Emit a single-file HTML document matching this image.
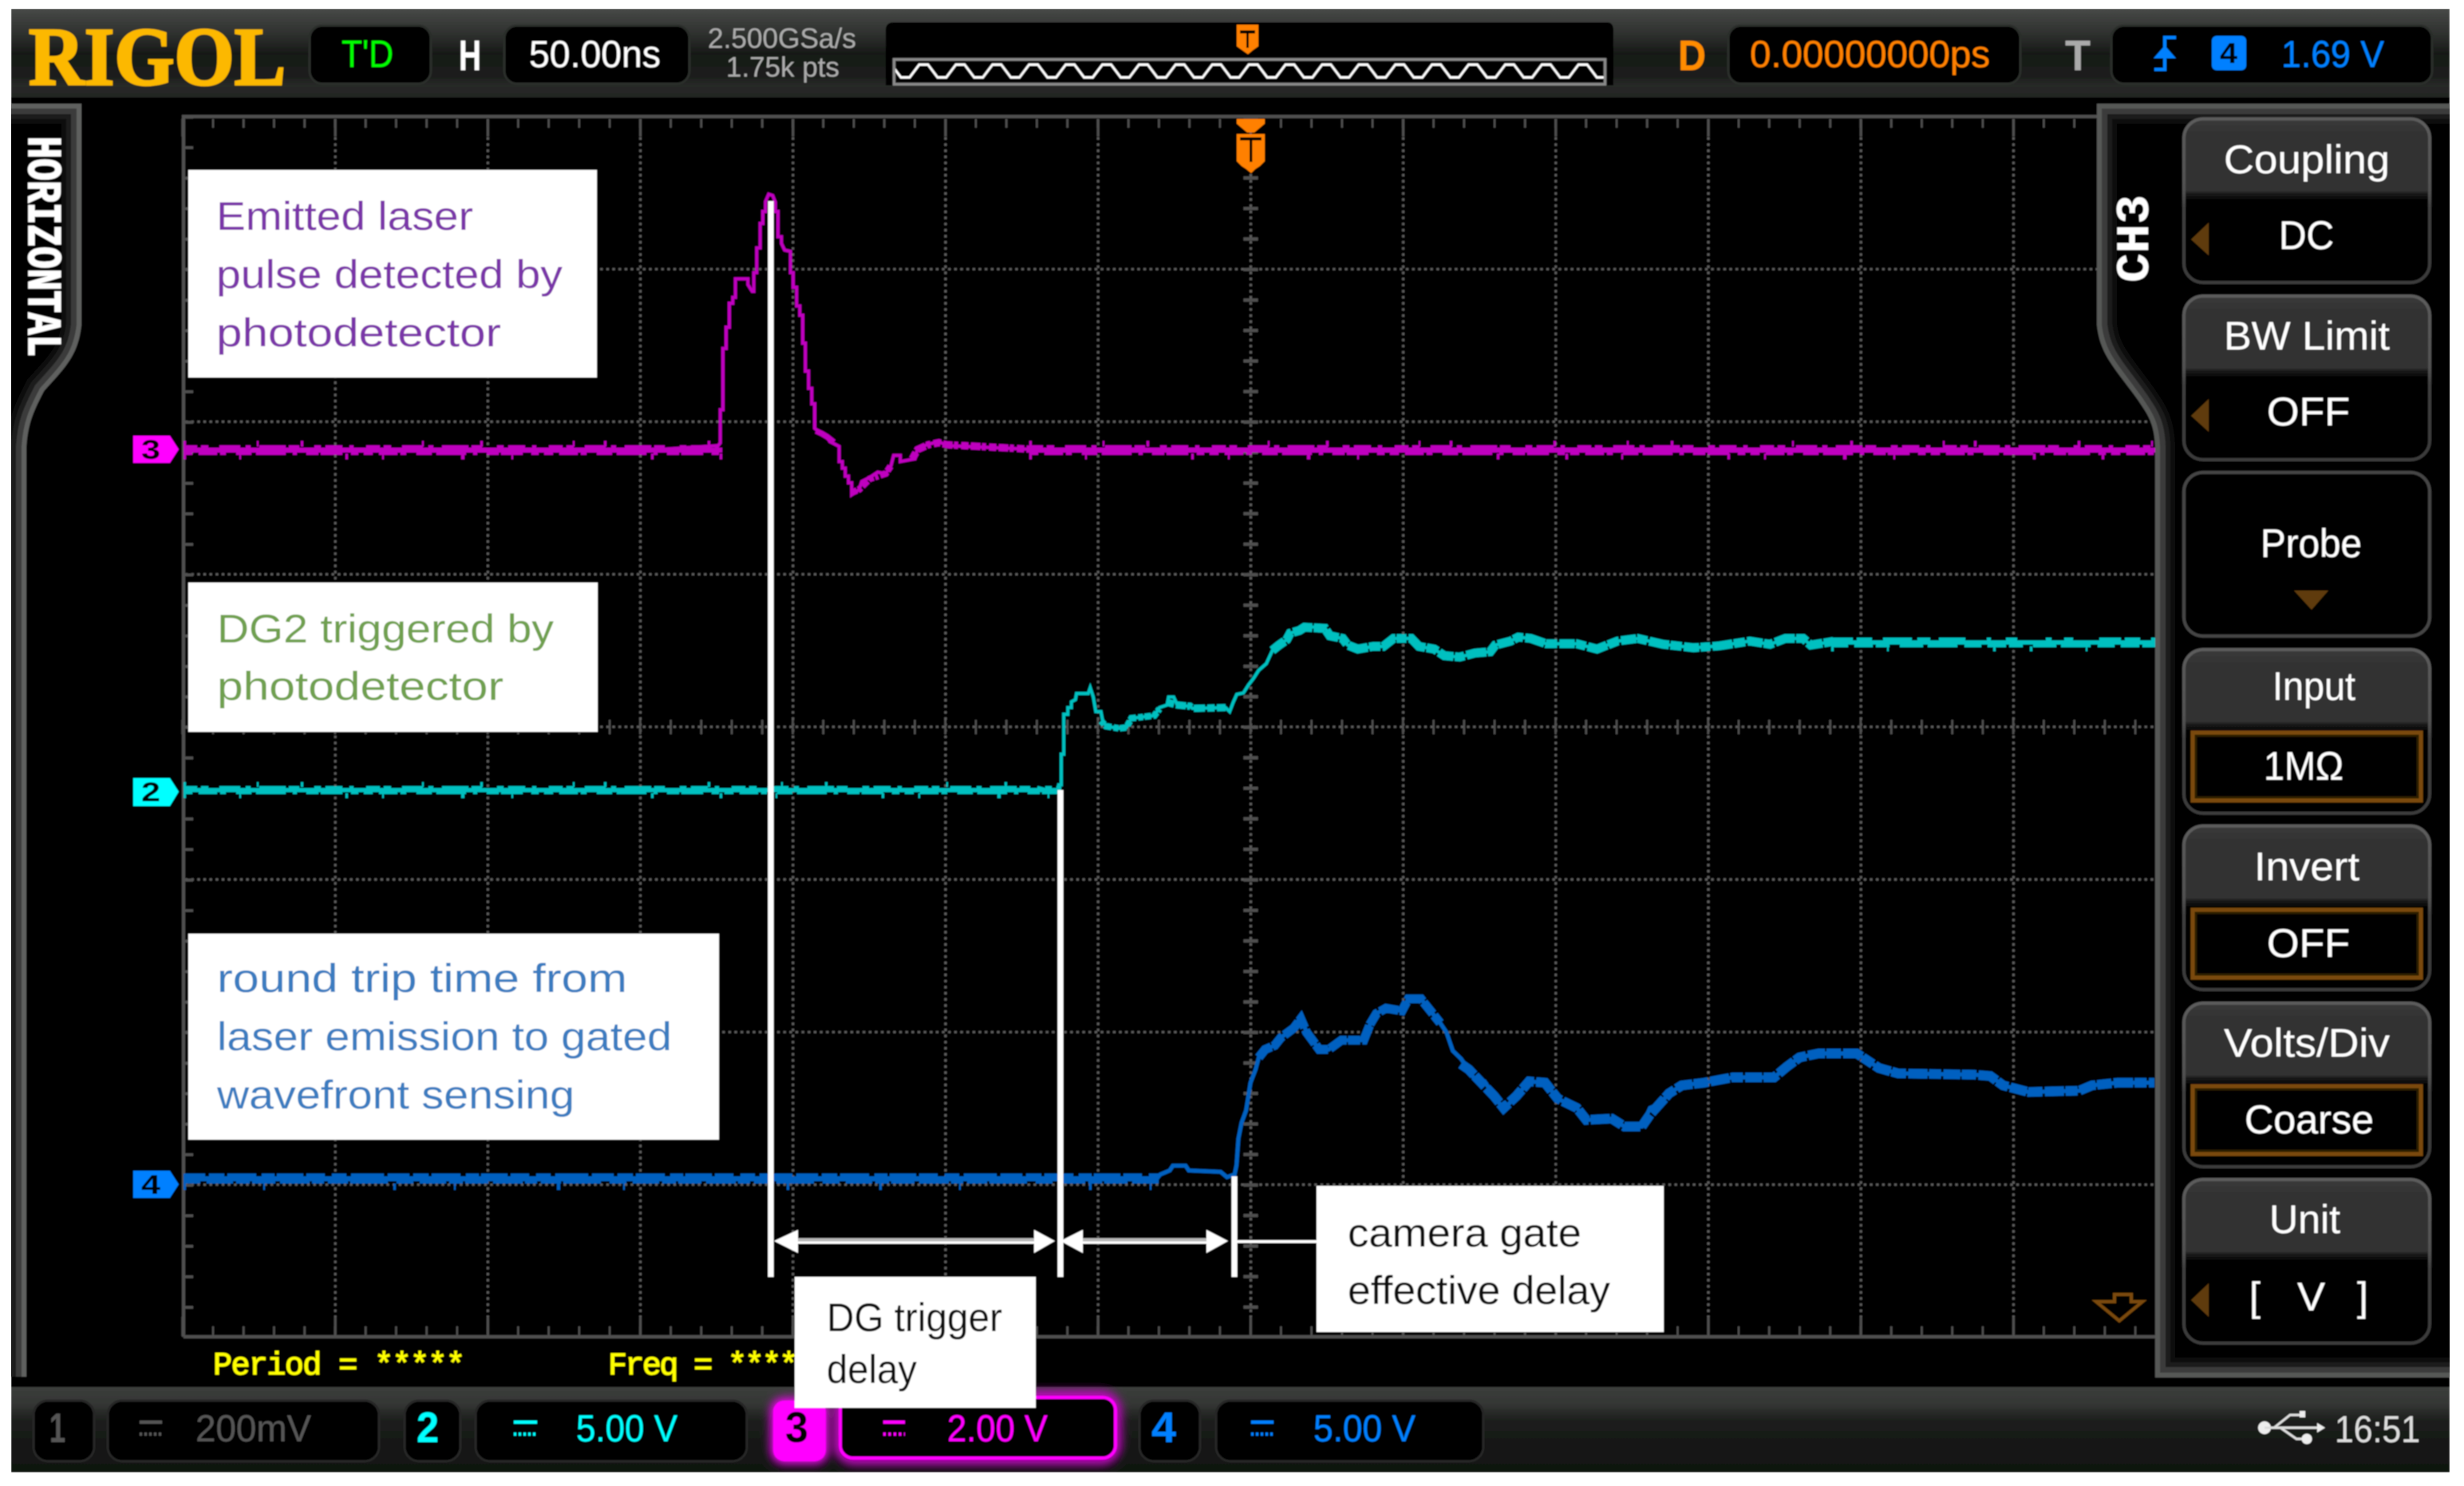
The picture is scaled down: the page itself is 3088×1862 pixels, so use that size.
<!DOCTYPE html>
<html lang="en">
<head>
<meta charset="utf-8">
<title>RIGOL oscilloscope capture</title>
<style>
html,body{margin:0;padding:0;background:#fff;width:3088px;height:1862px;overflow:hidden}
svg{display:block}
text{font-family:"Liberation Sans",sans-serif}
.m{font-family:"Liberation Mono",monospace}
.v{vector-effect:non-scaling-stroke;fill:none;stroke-linejoin:miter}
.lb{fill:#fff;font-size:50px}
.hd{fill:#aaa;font-size:35px}
</style>
</head>
<body>
<svg width="3088" height="1862" viewBox="0 0 3088 1862" xmlns="http://www.w3.org/2000/svg">
<defs>
<clipPath id="img"><rect x="14" y="11" width="3056" height="1834"/></clipPath>
<filter id="soft" filterUnits="userSpaceOnUse" x="0" y="0" width="3088" height="1862"><feGaussianBlur stdDeviation="0.7"/></filter>
<linearGradient id="top" x1="0" y1="0" x2="0" y2="1">
<stop offset="0" stop-color="#474947"/><stop offset=".12" stop-color="#3c3e3c"/><stop offset=".32" stop-color="#2b2d2b"/><stop offset=".5" stop-color="#171917"/><stop offset=".76" stop-color="#1b1d1b"/><stop offset=".86" stop-color="#272927"/><stop offset="1" stop-color="#232523"/>
</linearGradient>
<linearGradient id="bot" x1="0" y1="0" x2="0" y2="1">
<stop offset="0" stop-color="#3b3d3b"/><stop offset=".2" stop-color="#343634"/><stop offset=".4" stop-color="#1c1e1c"/><stop offset=".8" stop-color="#131513"/><stop offset="1" stop-color="#101210"/>
</linearGradient>
<linearGradient id="bf" x1="0" y1="0" x2="0" y2="1">
<stop offset="0" stop-color="#3a3a3a"/><stop offset=".08" stop-color="#333"/><stop offset=".44" stop-color="#303030"/><stop offset=".455" stop-color="#1c1c1c"/><stop offset=".5" stop-color="#000"/><stop offset="1" stop-color="#000"/>
</linearGradient>
<linearGradient id="bs" x1="0" y1="0" x2="0" y2="1">
<stop offset="0" stop-color="#5c5c5c"/><stop offset=".45" stop-color="#505050"/><stop offset=".55" stop-color="#3c3c3c"/><stop offset="1" stop-color="#3a3a3a"/>
</linearGradient>
<pattern id="wave" patternUnits="userSpaceOnUse" x="1135" y="76" width="45.9" height="26">
<path d="M0,21H5L17,5H28L40,21H46" fill="none" stroke="#fff" stroke-width="3"/>
</pattern>
<clipPath id="rc"><path d="M3200,130H2628V407C2632,445 2650,460 2680,502C2692,520 2700,530 2701,560V1726H3200Z"/></clipPath>
<clipPath id="lc"><path d="M-60,130H102V407C98,445 82,460 55,490C42,515 35,530 33,560V1725H-60Z"/></clipPath>
<filter id="gl" x="-20%" y="-30%" width="140%" height="160%"><feGaussianBlur stdDeviation="6"/></filter>
<g id="btn"><rect x="2737" y="0" width="308" height="205" rx="24" fill="url(#bf)" stroke="url(#bs)" stroke-width="4"/></g>
<g id="box"><rect x="2748" y="0" width="286" height="85" fill="#000" stroke="#7a4a08" stroke-width="5"/><rect x="2752" y="4" width="278" height="77" fill="none" stroke="#2c1a03" stroke-width="3"/></g>
</defs>

<rect width="3088" height="1862" fill="#fff"/>
<g clip-path="url(#img)" filter="url(#soft)">
<rect x="14" y="11" width="3056" height="1834" fill="#000"/>

<!-- grid -->
<g fill="none" stroke="#5c5c5c" stroke-width="3" stroke-dasharray="3.2 4.45">
<path d="M420.2,172V1650M611.4,172V1650M802.6,172V1650M993.8,172V1650M1185,172V1650M1376.2,172V1650M1567.5,172V1650M1758.6,172V1650M1949.8,172V1650M2141,172V1650M2332.2,172V1650M2523.4,172V1650"/>
<path d="M232,337.2H2706M232,528.4H2706M232,719.6H2706M232,910.8H2706M232,1102H2706M232,1293.2H2706M232,1484.4H2706"/>
</g>
<g fill="none" stroke="#505050">
<path d="M230,1675V146H2706M230,1675H2706" stroke-width="4"/>
<path d="M227.5,154.5H2706" stroke-width="11" stroke-dasharray="2.5 35.74"/>
<path d="M227.5,1668H2706" stroke-width="12" stroke-dasharray="2.5 35.74"/>
<path d="M236,145V1676" stroke-width="12" stroke-dasharray="3.5 34.74"/>
<path d="M227.5,911H2706" stroke-width="18" stroke-dasharray="2.5 35.74"/>
<path d="M1567.5,144.5V1676" stroke-width="18" stroke-dasharray="4 34.24"/>
<path d="M227.5,160H2706" stroke-width="22" stroke-dasharray="3 188.2"/>
<path d="M227.5,1662H2706" stroke-width="24" stroke-dasharray="3 188.2"/>
</g>

<!-- big trigger marker -->
<path d="M1550,149H1585V155L1572,166H1563L1550,155Z" fill="#ff8000"/>
<path d="M1550,168H1585V202L1579,208L1573,212L1568,217L1562,212L1556,208L1550,202Z" fill="#ff8000"/>
<path d="M1554,172H1581V176H1569.5V203H1566V176H1554Z" fill="#000"/>

<!-- magenta trace -->
<g stroke="#bf00bf" fill="none">
<path d="M230,564H905M1290,564H2706" stroke-width="6"/>
<path d="M230,561H905M1290,561H2706" stroke-width="6" stroke-dasharray="17 5 9 14 26 7 6 11 33 4 13 19 8 6 21 9 5 16"/>
<path d="M230,567H905M1290,567H2706" stroke-width="6" stroke-dasharray="11 8 23 4 7 13 19 6 37 9 5 12 15 3 27 11 9 7"/>
<path d="M230,572H905M1290,572H2706" stroke-width="7" stroke-dasharray="3 67 2 131 3 43 2 97 4 59 2 173 3 83"/>
<path d="M230,556H905M1290,556H2706" stroke-width="7" stroke-dasharray="3 89 2 53 3 149 2 71 3 113 2 37 3 127"/>
</g>
<g transform="translate(800 200) scale(.33333)">
<polyline class="v" stroke="#bf00bf" stroke-width="4" points="0,1095 300,1075 308,1065 308,940 318,940 318,710 330,710 330,630 342,630 342,540 355,540 355,518 365,518 365,448 412,448 412,470 428,495 434,495 434,425 445,425 445,332 458,332 458,240 468,240 468,195 478,195 478,158 490,130 505,135 515,160 515,195 525,195 525,290 538,290 538,315 550,340 572,345 572,425 582,425 582,480 595,480 595,550 607,550 607,585 618,585 618,690 628,690 628,795 640,795 640,860 652,860 652,918 663,918 663,1010 675,1020 705,1035 720,1060 755,1078 755,1135 767,1135 767,1160 778,1160 778,1190 790,1190 790,1215 802,1215 802,1260 830,1240 840,1210 870,1195 900,1175 930,1180 950,1150 960,1112 985,1112 985,1135 1040,1125 1050,1085 1090,1070 1130,1060 1160,1075 1500,1090"/>
<polyline class="v" stroke="#bf00bf" stroke-width="8" stroke-dasharray="7 2 4 3 9 2" points="802,1252 830,1240 870,1200 930,1180 950,1150"/>
<polyline class="v" stroke="#bf00bf" stroke-width="9" stroke-dasharray="9 3 12 2 5 4" points="1030,1125 1050,1090 1090,1072 1130,1064 1160,1072 1500,1090"/>
<polyline class="v" stroke="#bf00bf" stroke-width="7" points="668,1020 690,1030 710,1042 735,1062"/>
</g>

<!-- cyan trace -->
<g stroke="#00c0c0" fill="none">
<path d="M230,990H1330" stroke-width="5"/>
<path d="M230,987.5H1330" stroke-width="5" stroke-dasharray="17 5 9 14 26 7 6 11 33 4 13 19 8 6 21 9 5 16"/>
<path d="M230,992.5H1330" stroke-width="5" stroke-dasharray="11 8 23 4 7 13 19 6 37 9 5 12 15 3 27 11 9 7"/>
<path d="M230,997H1330" stroke-width="6" stroke-dasharray="3 67 2 131 3 43 2 97 4 59 2 173 3 83"/>
<path d="M230,983H1330" stroke-width="6" stroke-dasharray="3 89 2 53 3 149 2 71 3 113 2 37 3 127"/>
<path d="M2295,805H2706" stroke-width="5"/>
<path d="M2295,802H2706" stroke-width="6" stroke-dasharray="27 5 19 14 36 7 16 11 33"/>
<path d="M2295,808H2706" stroke-width="6" stroke-dasharray="21 8 23 4 17 13 29 6 37 9"/>
<path d="M2295,813H2706" stroke-width="6" stroke-dasharray="3 67 2 131 3 43"/>
</g>
<g transform="translate(1300 720) scale(.6377 .33333)">
<polyline class="v" stroke="#00c0c0" stroke-width="4" points="0,800 15,808 40,810 42,790 47,790 47,675 52,675 52,525 60,525 60,500 67,500 67,478 75,470 77,447 100,447 104,425 110,460 115,515 125,515 128,545 135,570 160,578 175,575 185,540 230,530 240,500 255,490 258,460 268,460 275,490 300,495 305,503 370,500 378,515 385,480 392,450 405,445 415,415 425,390 435,360 450,335 462,285 475,265 490,245 497,220 515,210 525,195 565,200 575,230 600,240 610,265 630,280 660,270 680,270 700,240 735,240 750,270 780,280 800,305 830,310 860,295 890,290 900,265 930,250 945,235 970,240 1000,260 1060,260 1100,280 1140,250 1180,240 1230,262 1290,275 1340,268 1400,250 1440,262 1470,240 1505,240 1520,265 1568,250"/>
<polyline class="v" stroke="#00c0c0" stroke-width="9" stroke-dasharray="9 3 12 2 5 4 14 3" points="255,480 275,490 300,495 305,503 370,500"/>
<polyline class="v" stroke="#00c0c0" stroke-width="11" stroke-dasharray="19 2 12 3 25 2 14 3" points="462,285 475,265 490,245 497,220 515,210 525,198 565,202 575,230 600,240 610,265 630,280 660,270 680,270 700,240 735,240 750,270 780,280 800,305 830,310 860,295 890,290 900,265 930,250 945,235 970,240 1000,260 1060,260 1100,280 1140,250 1180,240 1230,262 1290,275 1340,268 1400,250 1440,262 1470,240 1505,240 1520,265 1568,250"/>
<polyline class="v" stroke="#00c0c0" stroke-width="8" stroke-dasharray="6 2 8 3" points="125,550 135,570 160,578 175,575 185,540 230,530 240,505"/>
</g>

<!-- blue trace -->
<g stroke="#0060c0" fill="none">
<path d="M230,1477H1452" stroke-width="6"/>
<path d="M230,1473.5H1452" stroke-width="6" stroke-dasharray="27 5 19 4 36 7 16 3 33 4 23 9 18 6 41 5"/>
<path d="M230,1480H1452" stroke-width="6" stroke-dasharray="21 8 33 4 17 3 29 6 37 3 15 5 25 3 47 11"/>
<path d="M230,1487H1452" stroke-width="8" stroke-dasharray="3 97 2 161 3 73 2 127 4 79 2 203 3 113"/>
</g>
<g transform="translate(1450 1200) scale(.7972 .33333)">
<polyline class="v" stroke="#0060c0" stroke-width="5" points="0,830 5,815 20,800 25,782 45,782 50,800 100,805 110,825 122,815 125,780 128,680 133,620 140,575 147,470 155,420 160,375 170,345 185,330 195,300 215,265 226,220 235,280 255,345 270,345 290,310 325,310 335,250 345,210 360,190 385,200 395,155 415,155 430,200 445,245 455,280 465,350 478,380 488,415 500,460 515,465 530,520 545,570 565,520 585,465 610,470 630,530 660,565 675,610 715,605 735,635 762,635 775,565 790,550 805,510 825,480 860,470 905,450 970,450 990,410 1010,375 1040,360 1100,360 1135,415 1165,435 1285,440 1310,445 1330,480 1370,505 1450,500 1470,480 1510,470 1568,470"/>
<polyline class="v" stroke="#0060c0" stroke-width="11" stroke-dasharray="21 2 18 3 24 2 15 3" points="160,375 170,345 185,330 195,300 215,265 226,230 235,280 255,345 270,345 290,310 325,310 335,250 345,210 360,190 385,200 395,155 415,155 430,200 445,245"/>
<polyline class="v" stroke="#0060c0" stroke-width="12" stroke-dasharray="21 2 18 3 24 2 15 3" points="478,400 490,420 530,520 545,565 565,520 585,465 610,470 630,530 660,565 675,610 715,605 735,635 762,635 775,590 790,550 805,510 825,480 860,470 905,450 970,450 990,410 1010,375 1040,360 1100,360 1135,415 1165,435 1285,440 1310,445 1330,480 1370,505 1450,500 1470,480 1510,470 1568,470"/>
</g>

<!-- channel markers -->
<path d="M167,546H213L224,563L213,580H167Z" fill="#f0f"/>
<text x="177" y="575" font-size="34" font-weight="bold" fill="#000" textLength="24" lengthAdjust="spacingAndGlyphs">3</text>
<path d="M167,975H213L224,992L213,1010H167Z" fill="#0ff"/>
<text x="177" y="1004" font-size="34" font-weight="bold" fill="#000" textLength="24" lengthAdjust="spacingAndGlyphs">2</text>
<path d="M167,1467H213L224,1484L213,1501H167Z" fill="#0080ff"/>
<text x="177" y="1496" font-size="34" font-weight="bold" fill="#000" textLength="24" lengthAdjust="spacingAndGlyphs">4</text>

<!-- trigger level marker -->
<path d="M2650,1622H2671V1631H2685L2656,1655L2627,1631H2650Z" fill="none" stroke="#7a4a08" stroke-width="4"/>

<!-- yellow measurements -->
<text class="m" x="267" y="1722" font-size="40" fill="#ff0" stroke="#ff0" stroke-width="1" textLength="316" lengthAdjust="spacing">Period = *****</text>
<text class="m" x="762" y="1722" font-size="40" fill="#ff0" stroke="#ff0" stroke-width="1" textLength="260" lengthAdjust="spacing">Freq = *****</text>

<!-- right panel -->
<path d="M3200,130H2628V407C2632,445 2650,460 2680,502C2692,520 2700,530 2701,560V1726H3200Z" fill="#000"/>
<g clip-path="url(#rc)" fill="none">
<path d="M3200,130H2628V407C2632,445 2650,460 2680,502C2692,520 2700,530 2701,560V1726H3200" stroke="#0f100f" stroke-width="50"/>
<path d="M3200,130H2628V407C2632,445 2650,460 2680,502C2692,520 2700,530 2701,560V1726H3200" stroke="#1e1f1e" stroke-width="38"/>
<path d="M3200,130H2628V407C2632,445 2650,460 2680,502C2692,520 2700,530 2701,560V1726H3200" stroke="#3a3b3a" stroke-width="26"/>
<path d="M3200,130H2628V407C2632,445 2650,460 2680,502C2692,520 2700,530 2701,560V1726H3200" stroke="#565856" stroke-width="12"/>
</g>
<text class="m" transform="translate(2692 354) rotate(-90)" font-size="58" font-weight="bold" fill="#fff" textLength="110" lengthAdjust="spacingAndGlyphs">CH3</text>

<!-- left tab -->
<path d="M-60,130H102V407C98,445 82,460 55,490C42,515 35,530 33,560V1725H-60Z" fill="#000"/>
<g clip-path="url(#lc)" fill="none">
<path d="M-60,130H102V407C98,445 82,460 55,490C42,515 35,530 33,560V1725" stroke="#0f100f" stroke-width="50"/>
<path d="M-60,130H102V407C98,445 82,460 55,490C42,515 35,530 33,560V1725" stroke="#1e1f1e" stroke-width="38"/>
<path d="M-60,130H102V407C98,445 82,460 55,490C42,515 35,530 33,560V1725" stroke="#3a3b3a" stroke-width="26"/>
<path d="M-60,130H102V407C98,445 82,460 55,490C42,515 35,530 33,560V1725" stroke="#5e605e" stroke-width="12"/>
</g>
<text class="m" transform="translate(35 171) rotate(90)" font-size="60" font-weight="bold" fill="#fff" stroke="#fff" stroke-width="1.5" textLength="276" lengthAdjust="spacingAndGlyphs" y="-1">HORIZONTAL</text>

<!-- softkey buttons -->
<use href="#btn" y="149"/>
<use href="#btn" y="371"/>
<rect x="2737" y="592" width="308" height="205" rx="24" fill="#000" stroke="#444" stroke-width="4"/>
<use href="#btn" y="814"/>
<use href="#btn" y="1035"/>
<use href="#btn" y="1257"/>
<use href="#btn" y="1478"/>
<use href="#box" y="918"/>
<use href="#box" y="1140"/>
<use href="#box" y="1361"/>

<text class="lb" x="2787" y="217" textLength="208" lengthAdjust="spacingAndGlyphs">Coupling</text>
<text class="lb" x="2856" y="312" textLength="69" lengthAdjust="spacingAndGlyphs">DC</text>
<path d="M2768,279V320L2746,300Z" fill="#5f3b0a"/>
<text class="lb" x="2787" y="438" textLength="208" lengthAdjust="spacingAndGlyphs">BW Limit</text>
<text class="lb" x="2841" y="533" textLength="104" lengthAdjust="spacingAndGlyphs">OFF</text>
<path d="M2768,500V541L2746,521Z" fill="#5f3b0a"/>
<text class="lb" x="2833" y="698" textLength="127" lengthAdjust="spacingAndGlyphs">Probe</text>
<path d="M2875,740H2918L2897,764Z" fill="#5f3b0a"/>
<text class="lb" x="2848" y="877" textLength="104" lengthAdjust="spacingAndGlyphs">Input</text>
<text class="lb" x="2837" y="977" textLength="100" lengthAdjust="spacingAndGlyphs">1MΩ</text>
<text class="lb" x="2825" y="1103" textLength="132" lengthAdjust="spacingAndGlyphs">Invert</text>
<text class="lb" x="2841" y="1199" textLength="104" lengthAdjust="spacingAndGlyphs">OFF</text>
<text class="lb" x="2787" y="1324" textLength="208" lengthAdjust="spacingAndGlyphs">Volts/Div</text>
<text class="lb" x="2813" y="1420" textLength="162" lengthAdjust="spacingAndGlyphs">Coarse</text>
<text class="lb" x="2844" y="1545" textLength="89" lengthAdjust="spacingAndGlyphs">Unit</text>
<text class="lb" x="2819" y="1642">[</text>
<text class="lb" x="2879" y="1642" textLength="35" lengthAdjust="spacingAndGlyphs">V</text>
<text class="lb" x="2954" y="1642">]</text>
<path d="M2768,1608V1650L2746,1629Z" fill="#5f3b0a"/>

<!-- top bar -->
<rect x="14" y="11" width="3056" height="111" fill="url(#top)"/>
<text x="36" y="106" font-size="104" font-weight="bold" fill="#fcb800" stroke="#fcb800" stroke-width="2.5" style="font-family:'Liberation Serif',serif" textLength="322" lengthAdjust="spacingAndGlyphs">RIGOL</text>
<g fill="#000" stroke="#2c2e2c" stroke-width="3">
<rect x="388" y="32" width="152" height="73" rx="16"/>
<rect x="632" y="32" width="232" height="73" rx="16"/>
<rect x="2166" y="32" width="366" height="73" rx="16"/>
<rect x="2646" y="32" width="402" height="73" rx="16"/>
<path d="M1120,28H2014Q2022,28 2022,38V107H1110V38Q1110,28 1120,28Z" stroke="none"/>
</g>
<text x="428" y="84" font-size="48" fill="#0f0" textLength="65" lengthAdjust="spacingAndGlyphs">T'D</text>
<text x="575" y="88" font-size="54" font-weight="bold" fill="#fff" textLength="28" lengthAdjust="spacingAndGlyphs">H</text>
<text x="663" y="84" font-size="47" fill="#fff" textLength="165" lengthAdjust="spacingAndGlyphs">50.00ns</text>
<text class="hd" x="887" y="60" textLength="186" lengthAdjust="spacingAndGlyphs">2.500GSa/s</text>
<text class="hd" x="910" y="96" textLength="142" lengthAdjust="spacingAndGlyphs">1.75k pts</text>
<rect x="1120.5" y="74.5" width="891" height="31" fill="url(#wave)" stroke="#8a8a8a" stroke-width="3.5"/>
<path d="M1550,31H1577V58L1570,63L1564,68L1557,63L1550,58Z" fill="#ff8000"/>
<path d="M1554,38H1573V42H1565V60H1562V42H1554Z" fill="#000"/>
<text x="2103" y="88" font-size="54" font-weight="bold" fill="#ff8c00" textLength="35" lengthAdjust="spacingAndGlyphs">D</text>
<text x="2193" y="84" font-size="47" fill="#ff8000" textLength="301" lengthAdjust="spacingAndGlyphs">0.00000000ps</text>
<text x="2588" y="88" font-size="54" font-weight="bold" fill="#aaa" textLength="32" lengthAdjust="spacingAndGlyphs">T</text>
<path d="M2700,87H2713V47H2727" fill="none" stroke="#0080ff" stroke-width="4"/>
<path d="M2699,73H2727L2713,57Z" fill="#0080ff"/>
<rect x="2772" y="45" width="43" height="43" rx="6" fill="#0080ff"/>
<text x="2782" y="79" font-size="36" font-weight="bold" fill="#000" textLength="22" lengthAdjust="spacingAndGlyphs">4</text>
<text x="2859" y="84" font-size="47" fill="#0080ff" textLength="129" lengthAdjust="spacingAndGlyphs">1.69 V</text>

<!-- bottom bar -->
<rect x="14" y="1738" width="3056" height="106" fill="url(#bot)"/>
<rect x="14" y="1844" width="3056" height="1" fill="#333"/>
<g fill="#000" stroke="#262826" stroke-width="3">
<rect x="42" y="1755" width="76" height="76" rx="18"/>
<rect x="135" y="1755" width="340" height="76" rx="18"/>
<rect x="507" y="1755" width="70" height="76" rx="18"/>
<rect x="596" y="1755" width="340" height="76" rx="18"/>
<rect x="1428" y="1755" width="76" height="76" rx="18"/>
<rect x="1524" y="1755" width="335" height="76" rx="18"/>
</g>
<rect x="966" y="1752" width="72" height="82" rx="16" fill="#f0f" filter="url(#gl)"/>
<rect x="969" y="1755" width="66" height="76" rx="14" fill="#f0f"/>
<rect x="1052" y="1750" width="346" height="78" rx="18" fill="none" stroke="#d000d0" stroke-width="14" filter="url(#gl)"/>
<rect x="1053" y="1751" width="345" height="76" rx="16" fill="#000" stroke="#f0f" stroke-width="4"/>

<text x="62" y="1807" font-size="52" font-weight="bold" fill="#555" textLength="20" lengthAdjust="spacingAndGlyphs">1</text>
<text x="522" y="1807" font-size="54" font-weight="bold" fill="#0ff" textLength="28" lengthAdjust="spacingAndGlyphs">2</text>
<text x="984" y="1807" font-size="54" font-weight="bold" fill="#000" textLength="29" lengthAdjust="spacingAndGlyphs">3</text>
<text x="1443" y="1807" font-size="54" font-weight="bold" fill="#0080ff" textLength="31" lengthAdjust="spacingAndGlyphs">4</text>

<path d="M175,1782H203" stroke="#555" stroke-width="4"/><path d="M175,1797H203" stroke="#555" stroke-width="4" stroke-dasharray="3 3"/>
<path d="M644,1782H673" stroke="#0ff" stroke-width="4"/><path d="M644,1797H673" stroke="#0ff" stroke-width="4" stroke-dasharray="3 3"/>
<path d="M1107,1782H1134" stroke="#f0f" stroke-width="4"/><path d="M1107,1797H1134" stroke="#f0f" stroke-width="4" stroke-dasharray="3 3.5"/>
<path d="M1568,1782H1596" stroke="#0080ff" stroke-width="4"/><path d="M1568,1797H1596" stroke="#0080ff" stroke-width="4" stroke-dasharray="3 3"/>

<text x="245" y="1806" font-size="47" fill="#555" textLength="145" lengthAdjust="spacingAndGlyphs">200mV</text>
<text x="722" y="1806" font-size="47" fill="#0ff" textLength="127" lengthAdjust="spacingAndGlyphs">5.00 V</text>
<text x="1187" y="1806" font-size="47" fill="#f0f" textLength="126" lengthAdjust="spacingAndGlyphs">2.00 V</text>
<text x="1646" y="1806" font-size="47" fill="#0080ff" textLength="128" lengthAdjust="spacingAndGlyphs">5.00 V</text>

<!-- USB -->
<circle cx="2838" cy="1789" r="8" fill="#eee"/>
<path d="M2838,1789H2906M2850,1789L2870,1773H2886M2858,1789L2878,1803H2890" fill="none" stroke="#ddd" stroke-width="3"/>
<path d="M2904,1783L2914,1789L2904,1795Z" fill="#eee"/>
<rect x="2882" y="1768" width="7" height="8" fill="#eee"/>
<circle cx="2891" cy="1803" r="6.5" fill="#eee"/>
<text x="2926" y="1807" font-size="47" fill="#ddd" textLength="107" lengthAdjust="spacingAndGlyphs">16:51</text>

<!-- cursors and arrows -->
<g fill="#fff">
<rect x="962.5" y="252" width="7" height="1348"/>
<rect x="1325.5" y="990" width="7" height="610"/>
<rect x="1543.5" y="1474" width="7" height="126"/>
<path d="M970,1555L1000,1541V1570Z"/>
<path d="M1322,1555L1296,1541V1570Z"/>
<path d="M1329,1555L1357,1541V1570Z"/>
<path d="M1539,1555L1512,1541V1570Z"/>
<rect x="1548" y="1554" width="102" height="3.5"/>
</g>
<path d="M1000,1555H1296" stroke="#b8b8b8" stroke-width="7"/>
<path d="M1000,1557H1296" stroke="#fff" stroke-width="3"/>
<path d="M1357,1555H1512" stroke="#b8b8b8" stroke-width="7"/>
<path d="M1357,1557H1512" stroke="#fff" stroke-width="3"/>

<!-- annotation boxes -->
<g fill="#fff">
<rect x="236" y="213" width="512" height="260"/>
<rect x="236" y="730" width="513" height="187"/>
<rect x="236" y="1170" width="665" height="258"/>
<rect x="996" y="1600" width="302" height="164"/>
<rect x="1650" y="1486" width="435" height="183"/>
</g>
<g font-size="50">
<text x="271" y="288" fill="#7a35a8" textLength="322" lengthAdjust="spacingAndGlyphs">Emitted laser</text>
<text x="271" y="361" fill="#7a35a8" textLength="434" lengthAdjust="spacingAndGlyphs">pulse detected by</text>
<text x="271" y="434" fill="#7a35a8" textLength="357" lengthAdjust="spacingAndGlyphs">photodetector</text>
<text x="272" y="805" fill="#70a050" textLength="422" lengthAdjust="spacingAndGlyphs">DG2 triggered by</text>
<text x="272" y="877" fill="#70a050" textLength="359" lengthAdjust="spacingAndGlyphs">photodetector</text>
<text x="272" y="1243" fill="#3a7cc0" textLength="514" lengthAdjust="spacingAndGlyphs">round trip time from</text>
<text x="272" y="1316" fill="#3a7cc0" textLength="570" lengthAdjust="spacingAndGlyphs">laser emission to gated</text>
<text x="272" y="1389" fill="#3a7cc0" textLength="448" lengthAdjust="spacingAndGlyphs">wavefront sensing</text>
<text x="1036" y="1668" fill="#111" textLength="220" lengthAdjust="spacingAndGlyphs">DG trigger</text>
<text x="1036" y="1733" fill="#111" textLength="113" lengthAdjust="spacingAndGlyphs">delay</text>
<text x="1689" y="1562" fill="#111" textLength="293" lengthAdjust="spacingAndGlyphs">camera gate</text>
<text x="1689" y="1634" fill="#111" textLength="329" lengthAdjust="spacingAndGlyphs">effective delay</text>
</g>
</g>
</svg>
</body>
</html>
